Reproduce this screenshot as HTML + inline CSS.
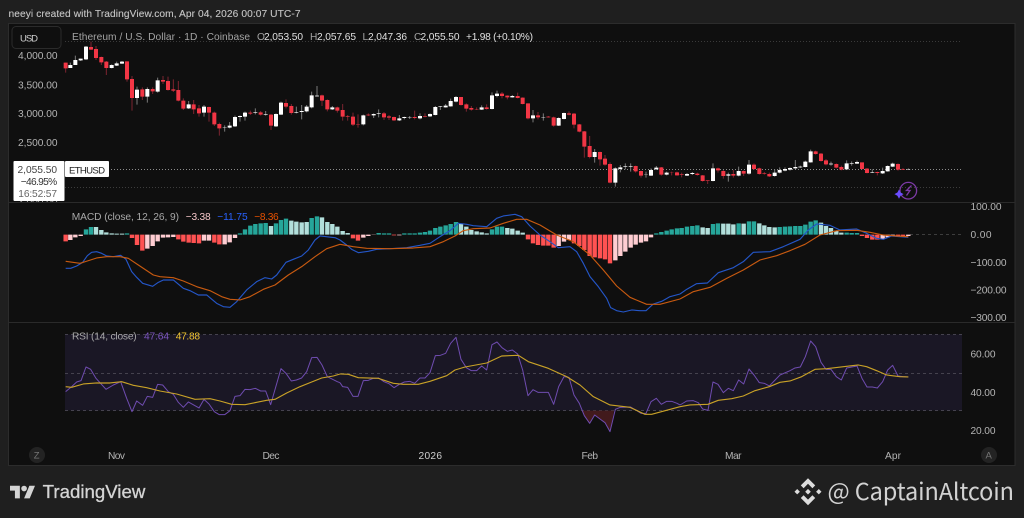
<!DOCTYPE html>
<html><head><meta charset="utf-8"><style>
html,body{margin:0;padding:0;background:#1f1f1f;width:1024px;height:518px;overflow:hidden}
svg{display:block}
text{font-family:"Liberation Sans",sans-serif;font-size:10.2px;fill:#b4b4b4}
</style></head><body>
<svg width="1024" height="518" viewBox="0 0 1024 518" xmlns="http://www.w3.org/2000/svg">
<rect width="1024" height="518" fill="#1f1f1f"/>
<rect x="8.5" y="23.5" width="1006.5" height="442" fill="#0f0f0f" stroke="#2c2c2c"/>
<text x="8.5" y="17" textLength="292" style="fill:#c4c4c4;font-size:10.2px;stroke:#c4c4c4;stroke-width:.12">neeyi created with TradingView.com, Apr 04, 2026 00:07 UTC-7</text>

<!-- grid -->
<path d="M65 41.5H962" stroke="#3a3a3a" stroke-dasharray="1 2" fill="none"/>
<path d="M108 169.5H962" stroke="#8c8c8c" stroke-dasharray="1 2" fill="none"/>
<path d="M65 187.5H962" stroke="#3d3d3d" stroke-dasharray="1 2" fill="none"/>
<path d="M910 234.5H962" stroke="#3d3d3d" stroke-dasharray="3 3" fill="none"/>
<rect x="65" y="334.5" width="897" height="76" fill="#1a1725"/>
<path d="M65 334.5H962M65 410.5H962M65 373.5H962" stroke="#45424e" stroke-dasharray="3 3" fill="none"/>

<g transform="scale(.33333)" fill="none">
<!-- candles -->
<g stroke-width="3" stroke="#7c2430">
<path d="M197 188V218M273 125V150M288 138V180M304 170V195M319 183V225M381 184V245M396 228V332M427 262V300M458 262V282M489 228V252M504 230V272M520 238V276M535 243V304M550 295V330M581 300V342M597 315V350M627 320V365M643 335V378M658 368V407M751 332V345M782 333V347M813 342V390M858 298V325M874 312V344M966 284V318M982 298V334M1012 320V338"/>
<path transform="translate(1020 0)" d="M8 312V362M23 345V362M39 338V378M54 343V383M85 340V348M132 336V360M147 345V360M162 350V363M224 332V358M255 340V352M363 291V317M379 310V335M394 318V332M410 322V330M440 313V329M486 276V295M502 286V298M533 278V295M548 292V313M564 310V358M594 336V358M625 348V353M641 350V380M687 334V346M702 339V385M718 372V397M733 393V473M749 408V475M780 455V497M795 465V497M810 487V550M887 497V518M903 512V533M964 501V527M995 515V526M1011 515V527"/>
<path transform="translate(2040 0)" d="M5 518V532M52 518V527M68 525V545M83 541V552M114 503V518M130 510V536M160 510V533M191 511V528M222 490V510M238 503V524M253 516V524M268 518V531M407 452V464M423 459V485M438 477V496M469 490V505M484 497V511M546 487V508M561 504V520M592 515V526M654 490V512M669 504V510"/>
</g>
<g stroke-width="3" stroke="#7a7a7a">
<path d="M211 188V204M226 167V195M242 176V183M258 138V180M335 193V205M350 185V198M366 183V192M411 260V314M442 262V308M473 233V278M566 303V327M612 315V350M674 376V395M689 366V385M705 347V381M720 346V365M735 335V362M766 325V343M797 333V347M828 340V381M843 305V345M889 320V340M905 315V358M920 315V337M935 275V325M951 258V290M997 318V330"/>
<path transform="translate(1020 0)" d="M70 344V376M101 340V354M116 328V352M178 345V363M193 350V358M209 348V357M240 340V358M270 340V351M286 318V346M301 318V330M317 312V323M332 296V320M348 288V307M425 316V330M456 277V328M471 272V292M517 285V293M579 330V367M610 340V362M656 352V378M672 338V358M764 447V488M826 502V560M841 495V517M856 490V508M872 490V515M918 515V533M933 505V528M949 498V509M980 515V526"/>
<path transform="translate(2040 0)" d="M21 519V528M37 516V525M99 490V544M145 518V545M176 500V529M207 480V524M284 508V530M299 502V520M315 502V514M330 502V512M346 480V507M361 497V504M376 482V502M392 449V488M453 485V497M500 481V509M515 484V497M531 482V492M577 508V519M608 503V522M623 496V515M638 488V501M685 505V510"/>
</g>
<g stroke-width="12" stroke="#f23645">
<path d="M197 188V205M273 141V149M288 147V174M304 171V187M319 185V204M381 184V238M396 237V294M427 268V290M458 267V274M489 240V245M504 243V270M520 268V272M535 270V302M550 302V326M581 313V328M597 325V340M627 321V338M643 338V373M658 372V385M751 338V341M782 337V344M813 344V377M858 309V320M874 318V339M966 286V302M982 300V328M1012 322V332"/>
<path transform="translate(1020 0)" d="M8 330V350M23 348V350M39 350V374M54 372V373M85 344V346M132 340V352M147 349V353M162 351V361M224 351V354M255 348V350M363 291V315M379 313V326M394 324V329M410 327V328M440 322V327M486 281V288M502 287V292M533 288V294M548 293V312M564 310V355M594 346V352M625 350V352M641 352V377M687 340V344M702 341V374M718 373V395M733 394V440M749 438V471M780 456V478M795 476V494M810 492V548M887 498V514M903 513V527M964 502V524M995 517V518M1011 517V526"/>
<path transform="translate(2040 0)" d="M5 523V525M52 521V525M68 526V543M83 541V543M114 505V511M130 513V528M160 522V527M191 513V521M222 494V507M238 505V522M253 519V521M268 522V529M407 454V462M423 461V483M438 481V493M469 492V503M484 501V509M546 487V507M561 506V519M592 516V519M654 492V509M669 507V509"/>
</g>
<g stroke-width="12" stroke="#ffffff">
<path d="M211 195V204M226 180V195M242 176V181M258 140V178M335 195V204M350 190V197M366 185V191M411 269V294M442 267V290M473 241V275M566 313V325M612 320V338M674 381V382M689 377V383M705 351V379M720 348V351M735 338V350M766 337V339M797 343V345M828 342V379M843 308V344M889 336V338M905 333V336M920 320V334M935 286V322M951 287V289M997 322V328"/>
<path transform="translate(1020 0)" d="M70 346V373M101 342V346M116 340V342M178 355V361M193 351V354M209 351V352M240 348V355M270 342V349M286 321V345M301 319V321M317 317V322M332 303V319M348 291V305M425 322V329M456 286V327M471 281V288M517 288V292M579 346V355M610 351V352M656 354V377M672 339V357M764 456V471M826 505V548M841 502V507M856 498V500M872 498V500M918 523V524M933 510V527M949 503V508M980 518V524"/>
<path transform="translate(2040 0)" d="M21 522V527M37 519V522M99 505V543M145 523V527M176 513V527M207 494V521M284 518V528M299 510V518M315 507V512M330 504V509M346 501V505M361 500V502M376 485V501M392 454V487M453 491V493M500 490V508M515 489V491M531 486V491M577 516V518M608 513V520M623 498V514M638 491V500M685 507V508"/>
</g>

<!-- MACD histogram + lines -->
<g transform="translate(0 600)">
<g stroke-width="13.2" stroke="#26a69a">
<path d="M258 104V88M273 104V81M381 104V100M720 104V100M735 104V88M751 104V77M766 104V72M782 104V70M797 104V69M828 104V70M843 104V60M858 104V56M935 104V54M951 104V49"/>
<path transform="translate(1020 0)" d="M116 104V99M132 104V100M147 104V100M193 104V100M209 104V100M224 104V100M240 104V98M255 104V96M270 104V92M286 104V84M301 104V80M317 104V76M332 104V72M348 104V66M456 104V88M471 104V80M486 104V80M949 104V100M964 104V96M980 104V92M995 104V88M1011 104V85"/>
<path transform="translate(2040 0)" d="M5 104V84M21 104V80M37 104V78M52 104V76M99 104V72M114 104V70M176 104V70M207 104V64M222 104V64M299 104V81M315 104V80M330 104V79M346 104V78M361 104V78M376 104V74M392 104V65M407 104V61M500 104V98M515 104V99M531 104V99"/>
</g>
<g stroke-width="13.2" stroke="#b2dfdb">
<path d="M288 104V81M304 104V90M319 104V97M335 104V100M350 104V101M366 104V101M813 104V78M874 104V62M889 104V65M905 104V67M920 104V66M966 104V52M982 104V66M997 104V72M1012 104V80"/>
<path transform="translate(1020 0)" d="M8 104V93M23 104V99M363 104V72M379 104V80M394 104V90M410 104V94M425 104V97M440 104V100M502 104V84M517 104V86M533 104V92M548 104V98"/>
<path transform="translate(2040 0)" d="M68 104V82M83 104V84M130 104V71M145 104V71M160 104V73M191 104V71M238 104V70M253 104V76M268 104V81M284 104V82M423 104V68M438 104V78M453 104V84M469 104V92M484 104V98"/>
</g>
<g stroke-width="13.2" stroke="#ff5252">
<path d="M197 104V124M396 104V114M411 104V135M427 104V152M535 104V118M550 104V125M566 104V128M581 104V129M597 104V130M643 104V128M658 104V133"/>
<path transform="translate(1020 0)" d="M39 104V115M54 104V122M162 104V106M564 104V118M579 104V130M594 104V135M610 104V137M625 104V137M641 104V143M702 104V130M718 104V138M733 104V150M749 104V168M764 104V172M780 104V175M795 104V178M810 104V190"/>
<path transform="translate(2040 0)" d="M546 104V108M561 104V114M577 104V119M592 104V119M654 104V110M669 104V109"/>
</g>
<g stroke-width="13.2" stroke="#ffcdd2">
<path d="M211 104V120M226 104V112M242 104V108M442 104V146M458 104V138M473 104V124M489 104V113M504 104V112M520 104V111M612 104V122M627 104V122M674 104V133M689 104V127M705 104V114"/>
<path transform="translate(1020 0)" d="M70 104V113M85 104V108M101 104V103M178 104V106M656 104V138M672 104V125M687 104V120M826 104V181M841 104V168M856 104V155M872 104V143M887 104V134M903 104V128M918 104V124M933 104V112"/>
<path transform="translate(2040 0)" d="M608 104V117M623 104V112M638 104V109M685 104V108"/>
</g>
<g stroke-width="3.4" stroke="#2456c8" stroke-linejoin="round">
<polyline points="197,205 212,205 230,198 248,187 262,167 275,157 290,155 305,160 320,168 340,170 362,166 378,178 395,215 410,232 428,250 458,259 475,247 490,240 520,240 550,265 570,272 595,285 620,285 650,310 670,320 690,322 710,305 740,270 770,245 795,233 815,237 830,225 858,187 880,178 905,168 925,150 945,120 960,108 985,111 1005,113 1020,120"/>
<polyline transform="translate(1020 0)" points="0,120 20,135 35,148 55,158 85,154 110,148 150,146 200,143 240,136 270,130 300,110 330,92 355,70 380,73 400,77 440,80 470,55 490,48 525,43 545,50 570,78 600,105 630,125 655,143 690,140 710,155 730,190 750,230 775,260 800,295 812,323 830,332 850,336 875,330 900,332 918,332 940,312 965,304 990,290 1020,282"/>
<polyline transform="translate(2040 0)" points="0,282 20,268 50,251 82,249 115,218 160,203 190,185 220,157 270,155 310,140 360,118 385,90 410,72 450,76 480,90 530,87 560,100 590,115 610,118 635,108 685,112"/>
</g>
<g stroke-width="3.4" stroke="#c85a10" stroke-linejoin="round">
<polyline points="197,184 240,190 262,183 290,174 320,170 360,170 385,175 415,195 460,225 480,230 520,233 550,243 590,260 630,272 665,290 690,298 720,300 750,290 790,268 825,255 865,225 905,200 945,170 980,146 1020,133"/>
<polyline transform="translate(1020 0)" points="0,133 40,140 80,145 150,146 220,144 270,140 310,125 345,108 370,92 400,86 450,84 490,70 530,58 560,58 600,75 650,105 700,125 750,165 790,210 830,258 870,292 920,313 960,313 1020,297"/>
<polyline transform="translate(2040 0)" points="0,297 40,275 90,262 140,235 190,210 240,180 290,167 330,152 375,133 420,105 470,92 530,91 570,97 610,105 650,108 685,110"/>
</g>
</g>

<!-- RSI -->
<g transform="translate(0 960)">
<polygon transform="translate(1020 0)" points="725,272 733,287 749,310 764,285 780,297 795,308 810,335 822,272" fill="#421a1c"/>
<g stroke-width="3" stroke="#6f4cb0" stroke-linejoin="round">
<polyline points="197,215 215,200 230,186 243,182 258,141 272,148 288,175 318,208 340,195 362,185 380,235 396,275 410,243 428,256 442,229 458,232 473,193 488,195 505,215 520,223 535,247 550,262 565,246 597,264 612,238 627,252 643,275 658,284 674,284 690,272 705,229 720,227 735,208 750,209 766,205 782,213 797,213 812,254 843,146 858,160 874,183 889,180 905,174 920,155 935,113 951,112 966,135 982,170 1012,185 1020,188"/>
<polyline transform="translate(1020 0)" points="0,188 8,200 23,202 39,229 54,229 70,182 85,181 100,175 116,174 132,185 147,191 162,203 178,193 193,186 209,184 224,190 240,174 255,174 270,158 286,107 301,106 317,100 332,70 348,52 363,118 379,143 394,152 410,152 425,138 440,150 456,74 471,66 486,83 502,94 517,90 533,102 548,150 564,227 579,209 594,217 625,217 641,253 656,200 672,170 687,172 702,225 718,250 733,287 749,310 764,285 780,297 795,308 810,335 826,268 841,262 872,261 887,270 903,280 918,280 933,245 949,235 964,253 980,244 995,244 1011,250 1020,255"/>
<polyline transform="translate(2040 0)" points="0,255 20,243 40,242 55,248 68,267 84,271 99,186 114,193 130,218 145,205 160,212 176,180 191,192 207,147 222,165 238,188 253,190 268,198 300,165 330,152 345,144 361,141 376,110 392,63 407,80 423,127 438,148 453,148 469,170 484,180 500,144 531,138 546,175 561,201 577,201 592,204 608,185 623,150 638,136 654,168 669,170 685,171"/>
</g>
<g stroke-width="3.4" stroke="#c9a227" stroke-linejoin="round">
<polyline points="197,200 215,202 250,192 290,189 330,189 365,185 400,196 440,203 480,213 530,222 585,238 630,236 660,243 695,253 735,254 770,247 800,241 825,238 860,219 900,200 935,186 965,174 1000,168 1020,162"/>
<polyline transform="translate(1020 0)" points="0,162 25,163 55,173 115,175 160,190 190,193 235,193 270,184 320,167 345,150 375,141 440,129 485,108 535,106 565,125 625,145 680,170 720,195 760,230 810,255 870,262 915,283 935,283 1020,260"/>
<polyline transform="translate(2040 0)" points="0,260 30,255 84,253 115,241 155,236 190,228 225,212 268,200 300,187 330,183 365,170 405,148 440,146 500,139 535,135 560,140 590,152 620,165 660,170 685,171"/>
</g>
</g>
</g>

<!-- USD button -->
<rect x="12" y="26.5" width="49" height="22" rx="4" fill="#0f0f0f" stroke="#2b2b2b"/>
<text x="20" y="41.5" textLength="18" style="fill:#d0d0d0;font-size:9.5px">USD</text>

<!-- legend -->
<text x="72" y="40" textLength="178" style="fill:#a4a4a4">Ethereum / U.S. Dollar · 1D · Coinbase</text>
<text x="257" y="40" style="fill:#a4a4a4">O</text><text x="264" y="40" textLength="39" style="fill:#e0e0e0">2,053.50</text>
<text x="310" y="40" style="fill:#a4a4a4">H</text><text x="317" y="40" textLength="39" style="fill:#e0e0e0">2,057.65</text>
<text x="362.5" y="40" style="fill:#a4a4a4">L</text><text x="368" y="40" textLength="39" style="fill:#e0e0e0">2,047.36</text>
<text x="414" y="40" style="fill:#a4a4a4">C</text><text x="420.5" y="40" textLength="39" style="fill:#e0e0e0">2,055.50</text>
<text x="466" y="40" textLength="67" style="fill:#e0e0e0">+1.98 (+0.10%)</text>

<!-- left axis -->
<text x="18" y="59" textLength="39.5">4,000.00</text>
<text x="18" y="88.5" textLength="39.5">3,500.00</text>
<text x="18" y="117" textLength="39.5">3,000.00</text>
<text x="18" y="146" textLength="39.5">2,500.00</text>
<text x="18" y="204.5" textLength="39.5">2,000.00</text>
<rect x="13" y="202.5" width="52" height="6" fill="#0f0f0f"/>

<path d="M9 202.5H1015M9 322.5H1015" stroke="#2a2a2a" fill="none"/>

<!-- price label -->
<rect x="13.5" y="161" width="51" height="40" rx="1" fill="#fff"/>
<rect x="65" y="161" width="44" height="16" rx="1" fill="#fff"/>
<text x="17.5" y="173" textLength="39.5" style="fill:#444">2,055.50</text>
<text x="20.7" y="185" textLength="36.5" style="fill:#333">−46.95%</text>
<text x="18.3" y="197" textLength="38.7" style="fill:#666">16:52:57</text>
<text x="69" y="173.5" textLength="36" style="fill:#222;font-size:9.6px">ETHUSD</text>

<!-- icon -->
<circle cx="908.3" cy="190.7" r="8.3" fill="none" stroke="#7c3aa6" stroke-width="1.3"/>
<path d="M911.5 185.5l-5 5h3.5l-3.5 5" fill="none" stroke="#7c3aa6" stroke-width="1.3"/>
<path d="M899 189.5l1.6 3 3 1.6-3 1.6-1.6 3-1.6-3-3-1.6 3-1.6z" fill="#6a4cff"/>

<!-- indicators -->
<text x="71.7" y="220" textLength="107.3" style="fill:#a8a8a8">MACD (close, 12, 26, 9)</text>
<text x="185.7" y="220" textLength="25" style="fill:#f5c6c8">−3.38</text>
<text x="217.3" y="220" textLength="30.4" style="fill:#2962ff">−11.75</text>
<text x="254.3" y="220" textLength="24.4" style="fill:#e65100">−8.36</text>
<text x="72" y="339.5" textLength="64.7" style="fill:#a8a8a8">RSI (14, close)</text>
<text x="144" y="339.5" textLength="25" style="fill:#7e57c2">47.64</text>
<text x="175.7" y="339.5" textLength="24.3" style="fill:#f0c430">47.88</text>

<!-- right axis -->
<text x="970.5" y="210" textLength="31">100.00</text>
<text x="970.5" y="238" textLength="21">0.00</text>
<text x="970.5" y="266" textLength="36">−100.00</text>
<text x="970.5" y="293.5" textLength="36">−200.00</text>
<text x="970.5" y="321" textLength="36">−300.00</text>
<text x="970.5" y="357.5" textLength="25">60.00</text>
<text x="970.5" y="396" textLength="25">40.00</text>
<text x="970.5" y="434" textLength="25">20.00</text>

<!-- time axis -->
<text x="108" y="459" textLength="17">Nov</text>
<text x="262.5" y="459" textLength="17">Dec</text>
<text x="418.5" y="459" textLength="23.5" style="fill:#cfcfcf">2026</text>
<text x="581.5" y="459" textLength="16.5">Feb</text>
<text x="725" y="459" textLength="16.5">Mar</text>
<text x="885" y="459" textLength="16">Apr</text>
<circle cx="37" cy="455" r="8" fill="#232323"/><text x="33.7" y="458.5" style="fill:#777;font-size:9.5px">Z</text>
<circle cx="989" cy="455" r="8" fill="#232323"/><text x="985.5" y="458.5" style="fill:#777;font-size:9.5px">A</text>

<!-- TV logo -->
<g transform="translate(10 482.9) scale(.704)" fill="#d4d4d4">
<path d="M14 22H7V11H0V4h14v18zM28 22h-8l7.5-18h8L28 22z"/><circle cx="20" cy="8" r="4"/>
</g>
<text x="42.7" y="498" textLength="102.6" lengthAdjust="spacingAndGlyphs" style="fill:#d4d4d4;font-size:18.5px;stroke:#d4d4d4;stroke-width:.3">TradingView</text>

<!-- Binance + CaptainAltcoin -->
<g transform="translate(808 491.7)" fill="#dcdcdc">
<path d="M0-13.5L7.2-6.3 4.4-3.5 0-7.9-4.4-3.5-7.2-6.3zM0 13.5L7.2 6.3 4.4 3.5 0 7.9-4.4 3.5-7.2 6.3zM-13.5 0L-10.8-2.7-8.1 0-10.8 2.7zM13.5 0L10.8-2.7 8.1 0 10.8 2.7zM0-2.8L2.8 0 0 2.8-2.8 0z"/>
</g>
<text x="827.5" y="500" textLength="186.5" style="font-family:'Noto Sans CJK JP','Liberation Sans',sans-serif;fill:#d2d2d2;font-size:23.5px">@ CaptainAltcoin</text>
</svg>
</body></html>
